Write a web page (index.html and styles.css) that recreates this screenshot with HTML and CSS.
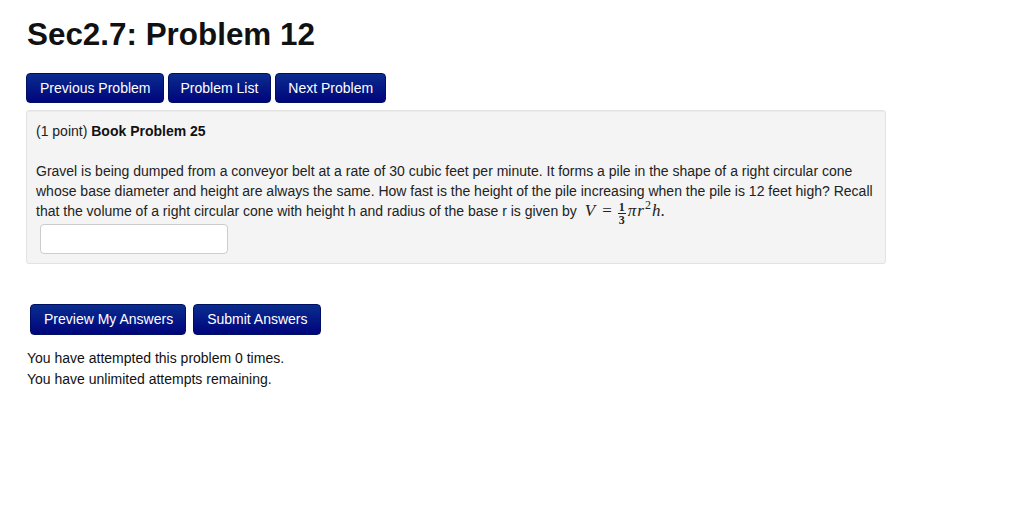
FILE: index.html
```html
<!DOCTYPE html>
<html>
<head>
<meta charset="utf-8">
<link rel="stylesheet" href="styles.css">
</head>
<body>
<div class="page">
  <h1 class="title">Sec2.7: Problem 12</h1>
  <div class="nav">
    <a class="btn">Previous Problem</a>
    <a class="btn">Problem List</a>
    <a class="btn">Next Problem</a>
  </div>
  <div class="well">
    <p class="head">(1 point) <b>Book Problem 25</b></p>
    <p class="body">Gravel is being dumped from a conveyor belt at a rate of 30 cubic feet per minute. It forms a pile in the shape of a right circular cone whose base diameter and height are always the same. How fast is the height of the pile increasing when the pile is 12 feet high? Recall that the volume of a right circular cone with height h and radius of the base r is given by <span class="math"><i class="v">V</i><span class="eq">=</span><span class="frac"><span class="num">1</span><span class="den">3</span></span><i class="pi">π</i><i class="r">r</i><sup>2</sup><i class="h">h</i>.</span></p>
    <input class="answer" type="text">
  </div>
  <div class="submit">
    <a class="btn">Preview My Answers</a>
    <a class="btn">Submit Answers</a>
  </div>
  <p class="info">You have attempted this problem 0 times.<br>You have unlimited attempts remaining.</p>
</div>
</body>
</html>
```
FILE: styles.css
```css
html, body {
  margin: 0;
  padding: 0;
  background: #fff;
}
body {
  font-family: "Liberation Sans", Arial, sans-serif;
  font-size: 14px;
  color: #222;
}
.page {
  padding: 0 0 0 26px;
  width: 860px;
}
.title {
  font-size: 31.4px;
  font-weight: bold;
  color: #111;
  margin: 0;
  padding: 17px 0 0 1px;
  line-height: 36px;
}
.nav {
  display: flex;
  gap: 4px;
  margin-top: 20px;
}
.btn {
  display: inline-block;
  height: 28px;
  line-height: 28px;
  padding: 0 12px;
  color: #fff;
  font-size: 14px;
  border: 1px solid #001060;
  border-radius: 4px;
  background: linear-gradient(#0a2d8e, #00047c);
  white-space: nowrap;
}
.nav .btn:nth-child(1) { padding: 0 12px 0 13px; }
.well {
  margin-top: 7px;
  background: #f4f4f4;
  border: 1px solid #e3e3e3;
  border-radius: 3px;
  padding: 11px 9px 9px 9px;
  height: 132px;
  box-shadow: inset 0 1px 1px rgba(0,0,0,0.04);
}
.head {
  margin: 0;
  line-height: 18px;
}
.head b { color: #111; }
.body {
  margin: 21px 0 0 0;
  font-size: 14px;
  line-height: 20px;
  height: 60px;
  color: #222;
}
.math {
  font-family: "Liberation Serif", "DejaVu Serif", serif;
  font-size: 17px;
  line-height: 16px;
  margin-left: 4px;
  white-space: nowrap;
}
.math i { font-style: italic; }
.math .eq { font-style: normal; padding: 0 6px 0 7px; }
.frac {
  display: inline-block;
  vertical-align: -8px;
  font-size: 12px;
  line-height: 11px;
  text-align: center;
  margin-right: 2px;
  font-weight: bold;
}
.frac .num { display: block; border-bottom: 1px solid #222; padding: 0 1px 0; }
.frac .den { display: block; padding-top: 1px; }
.math .r { margin-left: 1px; }
.math sup { font-size: 12px; vertical-align: 7px; line-height: 0; margin-left: 1px; }
.math .h { margin-left: 1px; }
.answer {
  display: block;
  margin: 3px 0 0 4px;
  width: 188px;
  height: 30px;
  padding: 0 5px;
  box-sizing: border-box;
  border: 1px solid #ccc;
  border-radius: 4px;
  background: #fff;
}
.submit {
  display: flex;
  gap: 7px;
  margin: 40px 0 0 4px;
}
.submit .btn { height: 29px; line-height: 29px; padding: 0 12px 0 13px; }
.info {
  margin: 13px 0 0 1px;
  line-height: 21px;
  color: #111;
}
```
